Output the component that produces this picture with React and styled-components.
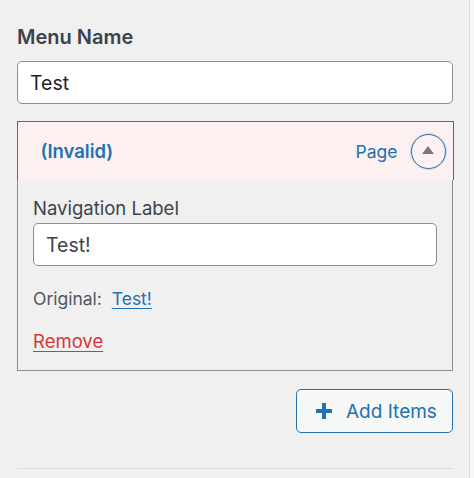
import React from 'react';
import styled, { createGlobalStyle } from 'styled-components';

const GlobalStyle = createGlobalStyle`
  html, body {
    margin: 0;
    padding: 0;
    background: #f6f7f7;
  }
  body {
    font-family: Inter, "Noto Sans", "Liberation Sans", sans-serif;
  }
`;

const Sidebar = styled.div`
  width: 470px;
  height: 478px;
  box-sizing: border-box;
  background: #f0f0f1;
  border-right: 1px solid #dcdcde;
  padding: 25px 0 0 17px;
`;

const Column = styled.div`
  width: 436px;
  display: flex;
  flex-direction: column;
`;

const Heading = styled.label`
  font-size: 20px;
  font-weight: 600;
  color: #3c434a;
  line-height: 24px;
  margin-bottom: 12px;
`;

const TextInput = styled.div`
  box-sizing: border-box;
  height: ${p => p.$height || 43}px;
  background: #fff;
  border: 1.5px solid #8c8f94;
  border-radius: 5px;
  display: flex;
  align-items: center;
  padding-left: ${p => p.$indent || 12}px;
  font-size: 19.5px;
  color: ${p => p.$muted ? '#3c434a' : '#1d2327'};
`;

const ItemBox = styled.div`
  margin-top: 17px;
  border: 1.5px solid #8c8f94;
  border-top: none;
`;

const ItemHeader = styled.div`
  height: 59px;
  box-sizing: border-box;
  background: #fcf0f1;
  border: 1.5px solid #d63638;
  border-bottom: none;
  margin: 0 -1.5px;
  display: flex;
  align-items: center;
  padding: 0 7px 0 23px;
`;

const ItemTitle = styled.span`
  flex: 1;
  font-size: 18.5px;
  font-weight: 600;
  color: #2271b1;
`;

const ItemType = styled.span`
  font-size: 17.5px;
  color: #2271b1;
  margin-right: 13px;
`;

const ToggleButton = styled.button`
  width: 35px;
  height: 35px;
  border-radius: 50%;
  border: 1.5px solid #2271b1;
  box-shadow: 0 0 0 1px rgba(114, 174, 230, 0.35);
  background: transparent;
  padding: 0;
  display: flex;
  align-items: center;
  justify-content: center;
  &::before {
    content: '';
    width: 0;
    height: 0;
    border-left: 6.5px solid transparent;
    border-right: 6.5px solid transparent;
    border-bottom: 8px solid #787c82;
    margin-top: -2px;
  }
`;

const ItemBody = styled.div`
  padding: 17px 15px 16px 15px;
  display: flex;
  flex-direction: column;
`;

const FieldLabel = styled.div`
  font-size: 18.5px;
  color: #3c434a;
  line-height: 22px;
  margin-bottom: 4px;
`;

const Original = styled.div`
  margin-top: 21px;
  font-size: 17.5px;
  color: #50575e;
  line-height: 24px;
`;

const TextLink = styled.a`
  color: ${p => p.$danger ? '#d63638' : '#2271b1'};
  text-decoration: underline;
  text-underline-offset: 3px;
  text-decoration-thickness: 1px;
  font-size: ${p => p.$size || 17.5}px;
  cursor: pointer;
`;

const RemoveRow = styled.div`
  margin-top: 18px;
  line-height: 24px;
`;

const Actions = styled.div`
  display: flex;
  justify-content: flex-end;
  margin-top: 18px;
`;

const AddButton = styled.button`
  width: 157px;
  height: 44px;
  box-sizing: border-box;
  border: 1.5px solid #2271b1;
  border-radius: 5px;
  background: #f6f7f7;
  color: #2271b1;
  font-family: inherit;
  font-size: 19px;
  display: flex;
  align-items: center;
  gap: 12px;
  padding: 0 0 0 17px;
`;

const Divider = styled.hr`
  margin: 35px 0 0 0;
  border: none;
  border-top: 1px solid #dcdcde;
`;

export default function App() {
  return (
    <>
      <GlobalStyle />
      <Sidebar>
        <Column>
          <Heading>Menu Name</Heading>
          <TextInput>Test</TextInput>
          <ItemBox>
            <ItemHeader>
              <ItemTitle>(Invalid)</ItemTitle>
              <ItemType>Page</ItemType>
              <ToggleButton aria-label="Collapse" />
            </ItemHeader>
            <ItemBody>
              <FieldLabel>Navigation Label</FieldLabel>
              <TextInput $muted>Test!</TextInput>
              <Original>
                Original:&nbsp;&nbsp;<TextLink>Test!</TextLink>
              </Original>
              <RemoveRow>
                <TextLink $danger $size={18.5}>Remove</TextLink>
              </RemoveRow>
            </ItemBody>
          </ItemBox>
          <Actions>
            <AddButton>
              <svg width="20" height="20" viewBox="0 0 20 20">
                <path d="M10 2v16M2 10h16" stroke="#2271b1" strokeWidth="4" />
              </svg>
              Add Items
            </AddButton>
          </Actions>
          <Divider />
        </Column>
      </Sidebar>
    </>
  );
}
